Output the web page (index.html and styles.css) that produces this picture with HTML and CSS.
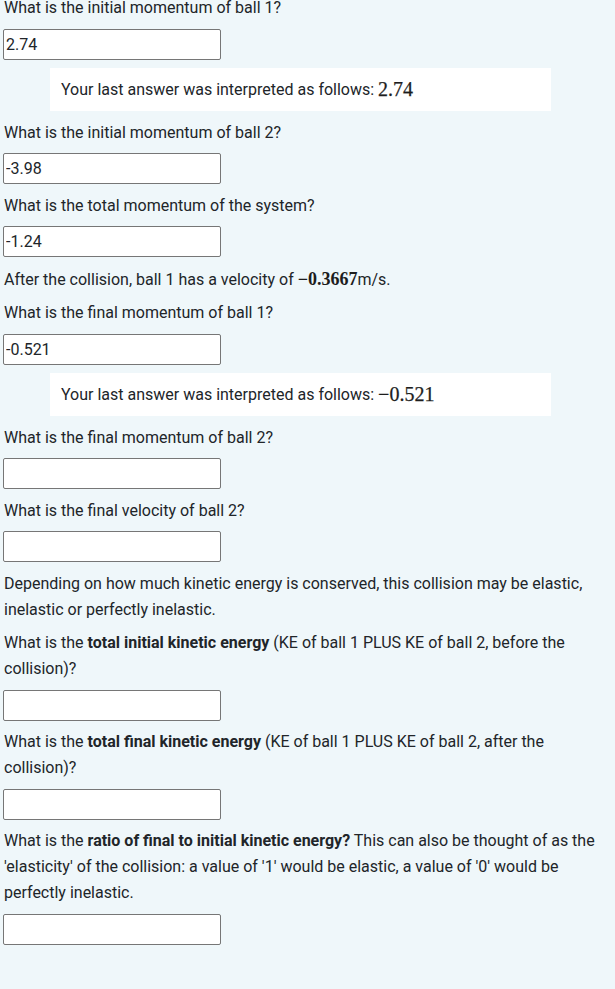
FILE: index.html
```html
<!DOCTYPE html>
<html>
<head>
<meta charset="utf-8">
<link rel="stylesheet" href="styles.css">
</head>
<body>
<div class="que">
  <p class="q">What is the initial momentum of ball 1?</p>
  <div class="ans"><input class="field" type="text" value="2.74"></div>
  <div class="feedback">Your last answer was interpreted as follows: <span class="math">2.74</span></div>

  <p class="q">What is the initial momentum of ball 2?</p>
  <div class="ans"><input class="field" type="text" value="-3.98"></div>

  <p class="q">What is the total momentum of the system?</p>
  <div class="ans"><input class="field" type="text" value="-1.24"></div>

  <p class="q">After the collision, ball 1 has a velocity of <span class="math strong">&minus;0.3667</span>m/s.</p>

  <p class="q">What is the final momentum of ball 1?</p>
  <div class="ans"><input class="field" type="text" value="-0.521"></div>
  <div class="feedback">Your last answer was interpreted as follows: <span class="math">&minus;0.521</span></div>

  <p class="q">What is the final momentum of ball 2?</p>
  <div class="ans"><input class="field" type="text" value=""></div>

  <p class="q">What is the final velocity of ball 2?</p>
  <div class="ans"><input class="field" type="text" value=""></div>

  <p class="q">Depending on how much kinetic energy is conserved, this collision may be elastic, inelastic or perfectly inelastic.</p>

  <p class="q">What is the <b>total initial kinetic energy</b> (KE of ball 1 PLUS KE of ball 2, before the collision)?</p>
  <div class="ans"><input class="field" type="text" value=""></div>

  <p class="q">What is the <b>total final kinetic energy</b> (KE of ball 1 PLUS KE of ball 2, after the collision)?</p>
  <div class="ans"><input class="field" type="text" value=""></div>

  <p class="q">What is the <b>ratio of final to initial kinetic energy?</b> This can also be thought of as the 'elasticity' of the collision: a value of '1' would be elastic, a value of '0' would be perfectly inelastic.</p>
  <div class="ans"><input class="field" type="text" value=""></div>
</div>
</body>
</html>
```

FILE: styles.css
```css
html, body {
  margin: 0;
  padding: 0;
  background: #eff7fa;
}
body {
  font-family: Roboto, "Liberation Sans", sans-serif;
  font-size: 16px;
  color: #212529;
}
.que {
  padding: 0 8px 0 4px;
  margin-top: -4.75px;
}
.q {
  margin: 0 0 7.5px 0;
  line-height: 26px;
}
.q b {
  font-weight: 700;
}
.ans {
  margin: 0 0 8.5px -1px;
  height: 31px;
}
.field {
  box-sizing: border-box;
  width: 218px;
  height: 31px;
  margin: 0;
  padding: 0 2px;
  border: 1px solid #767676;
  border-radius: 2px;
  background: #fff;
  font-family: Roboto, "Liberation Sans", sans-serif;
  font-size: 16px;
  color: #212529;
  outline: none;
}
.feedback {
  box-sizing: border-box;
  margin: 0 0 8.5px 46px;
  width: 501px;
  height: 43px;
  padding: 0 11px;
  background: #fff;
  display: flex;
  align-items: center;
  white-space: pre;
}
.math {
  font-family: "Liberation Serif", "DejaVu Serif", serif;
  font-size: 20px;
  color: #1d1d1d;
  -webkit-text-stroke: 0.25px #1d1d1d;
}
.math.strong {
  font-size: 18px;
  font-weight: 700;
  -webkit-text-stroke: 0;
}
```
